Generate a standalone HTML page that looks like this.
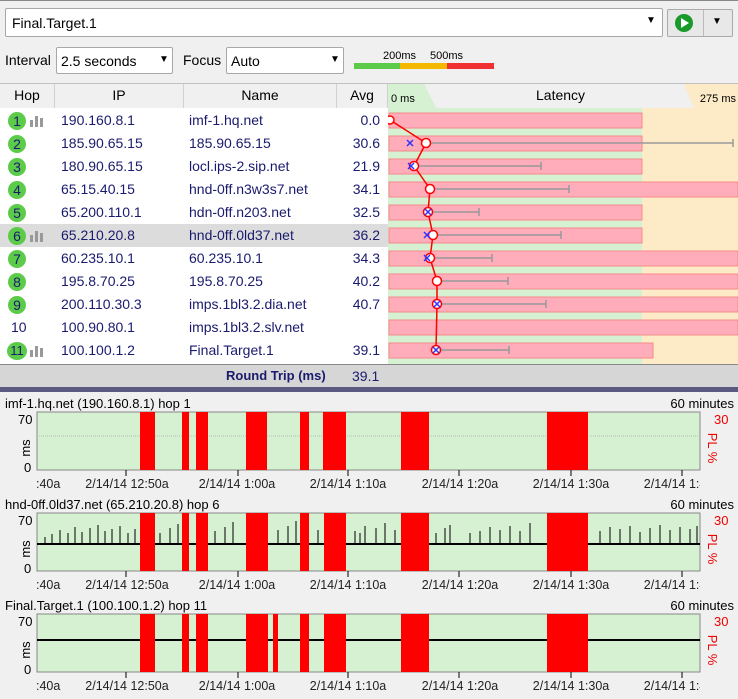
<!DOCTYPE html>
<html><head><meta charset="utf-8"><style>
*{margin:0;padding:0;box-sizing:border-box}
body{width:738px;height:699px;background:#f0f0f0;font-family:"Liberation Sans",sans-serif;font-size:13px;color:#000;position:relative;overflow:hidden}
.a{position:absolute;white-space:nowrap}
.box{position:absolute;background:#fff;border:1px solid #a8a8a8;border-radius:2px}
.row{position:absolute;left:0;width:388px;height:23px;color:#1a1a6e;font-size:14px}
.row span{position:absolute;top:3px}
.c{position:absolute;left:8px;top:3px;width:18px;height:18px;border-radius:50%;background:#5ccb4a;text-align:center;line-height:18px;color:#1a1a6e;font-size:14px}
.hd{position:absolute;top:84px;height:24px;background:#f0f0f0;border-right:1px solid #d0d0d0;text-align:center;line-height:23px;font-size:14px}
</style></head><body>
<div class="a" style="left:0;top:0;width:738px;height:1px;background:#888"></div>
<div class="box" style="left:5px;top:8px;width:658px;height:29px"></div>
<div class="a" style="left:12px;top:15px;font-size:14px">Final.Target.1</div>
<div class="a" style="left:646px;top:15px;font-size:10px">▼</div>
<div class="a" style="left:667px;top:9px;width:66px;height:28px;border:1px solid #aaa;border-radius:2px;background:#e8e8e8"></div>
<div class="a" style="left:703px;top:10px;width:1px;height:26px;background:#bbb"></div>
<svg class="a" style="left:674px;top:13px" width="20" height="20"><circle cx="10" cy="10" r="9" fill="#1a9a2a"/><path d="M7 5 L15 10 L7 15Z" fill="#fff"/></svg>
<div class="a" style="left:712px;top:16px;font-size:10px">▼</div>

<div class="a" style="left:5px;top:52px;font-size:14px">Interval</div>
<div class="box" style="left:56px;top:47px;width:117px;height:27px"></div>
<div class="a" style="left:61px;top:53px;font-size:14px">2.5 seconds</div>
<div class="a" style="left:159px;top:54px;font-size:10px">▼</div>
<div class="a" style="left:183px;top:52px;font-size:14px">Focus</div>
<div class="box" style="left:226px;top:47px;width:118px;height:27px"></div>
<div class="a" style="left:231px;top:53px;font-size:14px">Auto</div>
<div class="a" style="left:330px;top:54px;font-size:10px">▼</div>
<div class="a" style="left:383px;top:50px;font-size:11px">200ms</div>
<div class="a" style="left:430px;top:50px;font-size:11px">500ms</div>
<div class="a" style="left:354px;top:63px;width:46px;height:6px;background:#5ccb4a"></div>
<div class="a" style="left:400px;top:63px;width:47px;height:6px;background:#f5b800"></div>
<div class="a" style="left:447px;top:63px;width:47px;height:6px;background:#f03030"></div>

<div class="a" style="left:0;top:83px;width:738px;height:282px;background:#fff;border-top:1px solid #c0c0c0"></div>
<div class="hd" style="left:0;width:55px">Hop</div>
<div class="hd" style="left:55px;width:129px">IP</div>
<div class="hd" style="left:184px;width:153px">Name</div>
<div class="hd" style="left:337px;width:51px">Avg</div>

<svg class="a" style="left:388px;top:84px" width="350" height="280">
<rect x="0" y="0" width="350" height="280" fill="#fff"/>
<rect x="0" y="0" width="254" height="280" fill="#d6f0d2"/>
<rect x="254" y="0" width="96" height="280" fill="#fdebc8"/>
<path d="M0 0 H36 L48 24 H0Z" fill="#d6f0d2"/>
<path d="M36 0 H296 L306 24 H48Z" fill="#f0f0f0"/>
<path d="M296 0 H350 V24 H306Z" fill="#fdebc8"/>
<text x="3" y="18" font-size="11" font-family="Liberation Sans">0 ms</text>
<text x="148" y="16" font-size="14" font-family="Liberation Sans">Latency</text>
<text x="348" y="18" font-size="11" text-anchor="end" font-family="Liberation Sans">275 ms</text>
<g fill="#ffadbb" stroke="#f48a8a" stroke-width="1">
<rect x="1" y="29" width="253" height="15"/>
<rect x="1" y="52" width="253" height="15"/>
<rect x="1" y="75" width="253" height="15"/>
<rect x="1" y="98" width="349" height="15"/>
<rect x="1" y="121" width="253" height="15"/>
<rect x="1" y="144" width="253" height="15"/>
<rect x="1" y="167" width="349" height="15"/>
<rect x="1" y="190" width="349" height="15"/>
<rect x="1" y="213" width="349" height="15"/>
<rect x="1" y="236" width="349" height="15"/>
<rect x="1" y="259" width="264" height="15"/>
</g>
<g stroke="#999" stroke-width="1.5">
<path d="M38 59H345M345 55V63"/><path d="M26 82H153M153 78V86"/><path d="M42 105H181M181 101V109"/>
<path d="M40 128H91M91 124V132"/><path d="M45 151H173M173 147V155"/><path d="M42 174H104M104 170V178"/>
<path d="M49 197H120M120 193V201"/><path d="M49 220H158M158 216V224"/><path d="M48 266H121M121 262V270"/>
</g>
<polyline points="2,36 38,59 26,82 42,105 40,128 45,151 42,174 49,197 49,220 48,266" fill="none" stroke="#f00" stroke-width="1.5"/>
<g fill="#fff" stroke="#f00" stroke-width="1.5">
<circle cx="2" cy="36" r="4"/><circle cx="38" cy="59" r="4.5"/><circle cx="26" cy="82" r="4.5"/><circle cx="42" cy="105" r="4.5"/><circle cx="40" cy="128" r="4.5"/><circle cx="45" cy="151" r="4.5"/><circle cx="42" cy="174" r="4.5"/><circle cx="49" cy="197" r="4.5"/><circle cx="49" cy="220" r="4.5"/><circle cx="48" cy="266" r="4.5"/>
</g>
<g stroke="#33f" stroke-width="1.5">
<path d="M19 56l6 6M25 56l-6 6"/><path d="M20 79l6 6M26 79l-6 6"/><path d="M37 125l6 6M43 125l-6 6"/><path d="M36 148l6 6M42 148l-6 6"/><path d="M36 171l6 6M42 171l-6 6"/><path d="M46 217l6 6M52 217l-6 6"/><path d="M45 263l6 6M51 263l-6 6"/>
</g>
</svg>

<div class="a" style="left:0;top:224px;width:388px;height:23px;background:#dcdcdc"></div>

<div class="row" style="top:109px"><div class="c">1</div><svg class="a" style="left:30px;top:6px" width="14" height="12"><rect x="0" y="5" width="3" height="7" fill="#999"/><rect x="5" y="1" width="3" height="11" fill="#999"/><rect x="10" y="3" width="3" height="9" fill="#999"/></svg><span style="left:61px">190.160.8.1</span><span style="left:189px">imf-1.hq.net</span><span style="right:8px">0.0</span></div>
<div class="row" style="top:132px"><div class="c">2</div><span style="left:61px">185.90.65.15</span><span style="left:189px">185.90.65.15</span><span style="right:8px">30.6</span></div>
<div class="row" style="top:155px"><div class="c">3</div><span style="left:61px">180.90.65.15</span><span style="left:189px">locl.ips-2.sip.net</span><span style="right:8px">21.9</span></div>
<div class="row" style="top:178px"><div class="c">4</div><span style="left:61px">65.15.40.15</span><span style="left:189px">hnd-0ff.n3w3s7.net</span><span style="right:8px">34.1</span></div>
<div class="row" style="top:201px"><div class="c">5</div><span style="left:61px">65.200.110.1</span><span style="left:189px">hdn-0ff.n203.net</span><span style="right:8px">32.5</span></div>
<div class="row" style="top:224px"><div class="c">6</div><svg class="a" style="left:30px;top:6px" width="14" height="12"><rect x="0" y="5" width="3" height="7" fill="#999"/><rect x="5" y="1" width="3" height="11" fill="#999"/><rect x="10" y="3" width="3" height="9" fill="#999"/></svg><span style="left:61px">65.210.20.8</span><span style="left:189px">hnd-0ff.0ld37.net</span><span style="right:8px">36.2</span></div>
<div class="row" style="top:247px"><div class="c">7</div><span style="left:61px">60.235.10.1</span><span style="left:189px">60.235.10.1</span><span style="right:8px">34.3</span></div>
<div class="row" style="top:270px"><div class="c">8</div><span style="left:61px">195.8.70.25</span><span style="left:189px">195.8.70.25</span><span style="right:8px">40.2</span></div>
<div class="row" style="top:293px"><div class="c">9</div><span style="left:61px">200.110.30.3</span><span style="left:189px">imps.1bl3.2.dia.net</span><span style="right:8px">40.7</span></div>
<div class="row" style="top:316px"><span style="left:11px">10</span><span style="left:61px">100.90.80.1</span><span style="left:189px">imps.1bl3.2.slv.net</span></div>
<div class="row" style="top:339px"><div class="c" style="width:20px;left:7px;font-size:13px">11</div><svg class="a" style="left:30px;top:6px" width="14" height="12"><rect x="0" y="5" width="3" height="7" fill="#999"/><rect x="5" y="1" width="3" height="11" fill="#999"/><rect x="10" y="3" width="3" height="9" fill="#999"/></svg><span style="left:61px">100.100.1.2</span><span style="left:189px">Final.Target.1</span><span style="right:8px">39.1</span></div>

<div class="a" style="left:0;top:364px;width:738px;height:23px;background:#d6d6d6;border-top:1px solid #888"></div>
<div class="a" style="left:226px;top:368px;font-size:13px;font-weight:bold;color:#1a1a6e">Round Trip (ms)</div>
<div class="a" style="left:352px;top:368px;font-size:14px;color:#1a1a6e">39.1</div>
<div class="a" style="left:0;top:387px;width:738px;height:5px;background:#5a5a80"></div>

<svg class="a" style="left:0;top:392px" width="738" height="307" font-family="Liberation Sans">
<defs><clipPath id="cl"><rect x="0" y="0" width="700" height="100"/></clipPath></defs>
<rect width="738" height="307" fill="#f0f0f0"/>
<g>
<text x="5" y="16" font-size="13">imf-1.hq.net (190.160.8.1) hop 1</text>
<text x="734" y="16" font-size="13" text-anchor="end">60 minutes</text>
<rect x="37" y="20" width="663" height="58" fill="#d6f0d2" stroke="#888" stroke-width="1"/>
<line x1="37" y1="44" x2="700" y2="44" stroke="#bbb" stroke-dasharray="1,1"/>
<g fill="#f00"><rect x="140" y="20" width="15" height="58"/><rect x="182" y="20" width="7" height="58"/><rect x="196" y="20" width="12" height="58"/><rect x="246" y="20" width="21" height="58"/><rect x="300" y="20" width="9" height="58"/><rect x="323" y="20" width="23" height="58"/><rect x="401" y="20" width="28" height="58"/><rect x="547" y="20" width="41" height="58"/></g>
<g font-size="13"><text x="18" y="32">70</text><text x="24" y="80">0</text><text x="714" y="32" fill="#e00">30</text>
<text x="30" y="56" transform="rotate(-90 30 56)" text-anchor="middle">ms</text><text x="708" y="56" fill="#e00" transform="rotate(90 708 56)" text-anchor="middle">PL %</text></g>
<g font-size="12.5" fill="#222" clip-path="url(#cl)"><text x="36" y="96">:40a</text><text x="127" y="96" text-anchor="middle">2/14/14 12:50a</text><text x="237" y="96" text-anchor="middle">2/14/14 1:00a</text><text x="348" y="96" text-anchor="middle">2/14/14 1:10a</text><text x="460" y="96" text-anchor="middle">2/14/14 1:20a</text><text x="571" y="96" text-anchor="middle">2/14/14 1:30a</text><text x="682" y="96" text-anchor="middle">2/14/14 1:40a</text></g>
<g stroke="#000"><path d="M126 78v6M238 78v6M348 78v6M459 78v6M571 78v6M682 78v6"/></g>
</g>

<g transform="translate(0,101)">
<text x="5" y="16" font-size="13">hnd-0ff.0ld37.net (65.210.20.8) hop 6</text>
<text x="734" y="16" font-size="13" text-anchor="end">60 minutes</text>
<rect x="37" y="20" width="663" height="58" fill="#d6f0d2" stroke="#888"/>
<path d="M37 51H700" stroke="#000" stroke-width="2"/>
<path d="M45 51V44M52 51V41M60 51V37M68 51V40M75 51V34M82 51V39M90 51V35M98 51V32M105 51V38M112 51V36M120 51V33M128 51V40M135 51V36M160 51V40M170 51V35M178 51V31M215 51V38M225 51V34M233 51V29M278 51V37M288 51V33M296 51V28M318 51V37M355 51V38M365 51V33M376 51V35M385 51V30M395 51V37M436 51V40M445 51V35M360 51V40M450 51V32M470 51V40M480 51V38M490 51V34M500 51V37M510 51V33M520 51V38M530 51V30M600 51V38M610 51V34M620 51V36M630 51V33M640 51V39M650 51V35M660 51V32M670 51V37M680 51V34M690 51V36M697 51V33" stroke="#000" stroke-width="1"/>
<g fill="#f00"><rect x="140" y="20" width="15" height="58"/><rect x="182" y="20" width="7" height="58"/><rect x="196" y="20" width="12" height="58"/><rect x="246" y="20" width="22" height="58"/><rect x="300" y="20" width="9" height="58"/><rect x="324" y="20" width="22" height="58"/><rect x="401" y="20" width="28" height="58"/><rect x="547" y="20" width="41" height="58"/></g>
<g font-size="13"><text x="18" y="32">70</text><text x="24" y="80">0</text><text x="714" y="32" fill="#e00">30</text>
<text x="30" y="56" transform="rotate(-90 30 56)" text-anchor="middle">ms</text><text x="708" y="56" fill="#e00" transform="rotate(90 708 56)" text-anchor="middle">PL %</text></g>
<g font-size="12.5" fill="#222" clip-path="url(#cl)"><text x="36" y="96">:40a</text><text x="127" y="96" text-anchor="middle">2/14/14 12:50a</text><text x="237" y="96" text-anchor="middle">2/14/14 1:00a</text><text x="348" y="96" text-anchor="middle">2/14/14 1:10a</text><text x="460" y="96" text-anchor="middle">2/14/14 1:20a</text><text x="571" y="96" text-anchor="middle">2/14/14 1:30a</text><text x="682" y="96" text-anchor="middle">2/14/14 1:40a</text></g>
<g stroke="#000"><path d="M126 78v6M238 78v6M348 78v6M459 78v6M571 78v6M682 78v6"/></g>
</g>

<g transform="translate(0,202)">
<text x="5" y="16" font-size="13">Final.Target.1 (100.100.1.2) hop 11</text>
<text x="734" y="16" font-size="13" text-anchor="end">60 minutes</text>
<rect x="37" y="20" width="663" height="58" fill="#d6f0d2" stroke="#888"/>
<path d="M37 46H700" stroke="#000" stroke-width="2"/>
<g fill="#f00"><rect x="140" y="20" width="15" height="58"/><rect x="182" y="20" width="7" height="58"/><rect x="196" y="20" width="12" height="58"/><rect x="246" y="20" width="22" height="58"/><rect x="273" y="20" width="5" height="58"/><rect x="300" y="20" width="9" height="58"/><rect x="324" y="20" width="22" height="58"/><rect x="401" y="20" width="28" height="58"/><rect x="547" y="20" width="41" height="58"/></g>
<g font-size="13"><text x="18" y="32">70</text><text x="24" y="80">0</text><text x="714" y="32" fill="#e00">30</text>
<text x="30" y="56" transform="rotate(-90 30 56)" text-anchor="middle">ms</text><text x="708" y="56" fill="#e00" transform="rotate(90 708 56)" text-anchor="middle">PL %</text></g>
<g font-size="12.5" fill="#222" clip-path="url(#cl)"><text x="36" y="96">:40a</text><text x="127" y="96" text-anchor="middle">2/14/14 12:50a</text><text x="237" y="96" text-anchor="middle">2/14/14 1:00a</text><text x="348" y="96" text-anchor="middle">2/14/14 1:10a</text><text x="460" y="96" text-anchor="middle">2/14/14 1:20a</text><text x="571" y="96" text-anchor="middle">2/14/14 1:30a</text><text x="682" y="96" text-anchor="middle">2/14/14 1:40a</text></g>
<g stroke="#000"><path d="M126 78v6M238 78v6M348 78v6M459 78v6M571 78v6M682 78v6"/></g>
</g>
</svg>
</body></html>
